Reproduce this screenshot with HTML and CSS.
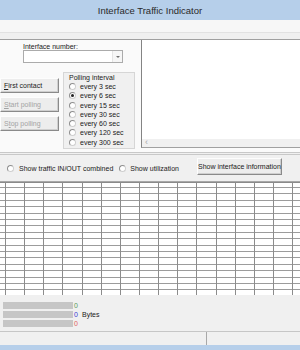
FILE: index.html
```html
<!DOCTYPE html>
<html>
<head>
<meta charset="utf-8">
<link rel="stylesheet" href="styles.css">
</head>
<body>
<div class="titlebar">Interface Traffic Indicator</div>
<div class="menubar"></div>
<div class="toolbar"></div>
<div class="top">
  <div class="left">
    <div class="label">Interface number:</div>
    <div class="combo"><div class="combo-btn"><span class="arrow"></span></div></div>
    <div class="controls">
      <div class="buttons">
        <div class="btn"><u>F</u>irst contact</div>
        <div class="btn disabled"><u>S</u>tart polling</div>
        <div class="btn disabled">S<u>t</u>op polling</div>
      </div>
      <div class="group">
        <div class="group-title">Polling interval</div>
        <div class="opt"><span class="radio"></span>every 3 sec</div>
        <div class="opt"><span class="radio checked"></span>every 6 sec</div>
        <div class="opt"><span class="radio"></span>every 15 sec</div>
        <div class="opt"><span class="radio"></span>every 30 sec</div>
        <div class="opt"><span class="radio"></span>every 60 sec</div>
        <div class="opt"><span class="radio"></span>every 120 sec</div>
        <div class="opt"><span class="radio"></span>every 300 sec</div>
      </div>
    </div>
  </div>
  <div class="listbox">
    <div class="hscroll">&lsaquo;</div>
  </div>
</div>
<div class="sep"></div>
<div class="opts">
  <span class="radio"></span><span class="opt-text">Show traffic IN/OUT combined</span>
  <span class="radio second"></span><span class="opt-text2">Show utilization</span>
  <div class="btn wide">Show interface information</div>
</div>
<div class="graph">
<svg width="300" height="113" viewBox="0 0 300 113" shape-rendering="crispEdges">
  <g stroke="#9c9c9c" stroke-width="1">
    <line x1="0" y1="0.5" x2="300" y2="0.5" stroke="#8a8a8a"/>
    <line x1="0" y1="5.5" x2="300" y2="5.5"/>
    <line x1="0" y1="11.5" x2="300" y2="11.5"/>
    <line x1="0" y1="18.5" x2="300" y2="18.5"/>
    <line x1="0" y1="24.5" x2="300" y2="24.5"/>
    <line x1="0" y1="31.5" x2="300" y2="31.5"/>
    <line x1="0" y1="37.5" x2="300" y2="37.5"/>
    <line x1="0" y1="43.5" x2="300" y2="43.5"/>
    <line x1="0" y1="50.5" x2="300" y2="50.5"/>
    <line x1="0" y1="56.5" x2="300" y2="56.5"/>
    <line x1="0" y1="63.5" x2="300" y2="63.5"/>
    <line x1="0" y1="69.5" x2="300" y2="69.5"/>
    <line x1="0" y1="75.5" x2="300" y2="75.5"/>
    <line x1="0" y1="82.5" x2="300" y2="82.5"/>
    <line x1="0" y1="88.5" x2="300" y2="88.5"/>
    <line x1="0" y1="95.5" x2="300" y2="95.5"/>
    <line x1="0" y1="101.5" x2="300" y2="101.5"/>
    <line x1="0" y1="107.5" x2="300" y2="107.5"/>
  </g>
  <g stroke="#8c8c8c" stroke-width="1">
    <line x1="5.5" y1="0" x2="5.5" y2="113"/>
    <line x1="24.5" y1="0" x2="24.5" y2="113"/>
    <line x1="43.5" y1="0" x2="43.5" y2="113"/>
    <line x1="62.5" y1="0" x2="62.5" y2="113"/>
    <line x1="82.5" y1="0" x2="82.5" y2="113"/>
    <line x1="101.5" y1="0" x2="101.5" y2="113"/>
    <line x1="120.5" y1="0" x2="120.5" y2="113"/>
    <line x1="139.5" y1="0" x2="139.5" y2="113"/>
    <line x1="158.5" y1="0" x2="158.5" y2="113"/>
    <line x1="177.5" y1="0" x2="177.5" y2="113"/>
    <line x1="196.5" y1="0" x2="196.5" y2="113"/>
    <line x1="216.5" y1="0" x2="216.5" y2="113"/>
    <line x1="235.5" y1="0" x2="235.5" y2="113"/>
    <line x1="254.5" y1="0" x2="254.5" y2="113"/>
    <line x1="273.5" y1="0" x2="273.5" y2="113"/>
    <line x1="292.5" y1="0" x2="292.5" y2="113"/>
  </g>
</svg>
</div>
<div class="meters">
  <div class="meter"><div class="bar"></div><span class="val green">0</span></div>
  <div class="meter"><div class="bar"></div><span class="val blue">0</span><span class="unit">Bytes</span></div>
  <div class="meter"><div class="bar"></div><span class="val red">0</span></div>
</div>
<div class="statusbar"><div class="cell"></div></div>
<div class="bottom"></div>
</body>
</html>
```
FILE: styles.css
```css
* { box-sizing: border-box; margin: 0; padding: 0; }
html, body { width: 300px; height: 350px; overflow: hidden; }
body {
  font-family: "Liberation Sans", Arial, sans-serif;
  font-size: 7px;
  color: #1a1a1a;
  background: #f0f0f0;
  display: flex;
  flex-direction: column;
}
.titlebar {
  height: 20px;
  flex: none;
  background: #b6cfea;
  display: flex;
  align-items: center;
  justify-content: center;
  font-size: 9.5px;
  color: #2a2a2a;
}
.menubar { height: 13px; flex: none; background: #f7f7f7; border-bottom: 1px solid #e2e2e2; }
.toolbar { height: 7px; flex: none; background: #f0f0f0; border-bottom: 1px solid #a0a0a0; }
.top { height: 112px; flex: none; display: flex; background: #fafafa; }
.left { width: 141px; flex: none; }
.label { height: 7px; line-height: 7px; margin: 3px 0 0 23px; color: #222; }
.combo {
  margin-left: 23px;
  width: 100px;
  height: 13px;
  border: 1px solid #ababab;
  background: #fff;
  display: flex;
  justify-content: flex-end;
}
.combo-btn {
  width: 10px;
  height: 100%;
  background: #f6f6f6;
  border-left: 1px solid #e4e4e4;
  display: flex;
  align-items: center;
  justify-content: center;
}
.arrow {
  width: 0; height: 0;
  border-left: 2px solid transparent;
  border-right: 2px solid transparent;
  border-top: 2px solid #707070;
}
.controls { display: flex; margin-top: 9px; }
.buttons { width: 59px; margin-top: 6px; display: flex; flex-direction: column; gap: 4px; }
.btn {
  height: 15px;
  display: flex;
  align-items: center;
  padding-left: 3px;
  background: #ededed;
  border-top: 1px solid #fdfdfd;
  border-left: 1px solid #fdfdfd;
  border-right: 1px solid #8a8a8a;
  border-bottom: 1px solid #8a8a8a;
  box-shadow: inset -1px -1px #cfcfcf;
  white-space: nowrap;
}
.btn u { text-decoration: underline; }
.btn.disabled { color: #a3a3a3; }
.group {
  margin-left: 4px;
  width: 72px;
  height: 77px;
  border: 1px solid #d6d6d6;
  background: #f0f0f0;
  padding-left: 5px;
}
.group-title { line-height: 8px; margin-top: 1px; }
.opt { height: 9.25px; display: flex; align-items: center; gap: 4px; white-space: nowrap; }
.radio {
  width: 7px;
  height: 7px;
  flex: none;
  border-radius: 50%;
  border: 1px solid #8e8e8e;
  border-right-color: #cfcfcf;
  border-bottom-color: #cfcfcf;
  background: #fff;
  display: flex;
  align-items: center;
  justify-content: center;
}
.radio.checked::after {
  content: "";
  width: 3px;
  height: 3px;
  border-radius: 50%;
  background: #222;
}
.listbox {
  flex: 1;
  height: 108px;
  border-left: 1px solid #848484;
  border-bottom: 1px solid #a0a0a0;
  background: #fff;
  display: flex;
  flex-direction: column;
  justify-content: flex-end;
}
.hscroll {
  height: 8px;
  background: #f0f0f0;
  padding-left: 3px;
  color: #a8a8a8;
  font-size: 9px;
  line-height: 7px;
}
.sep { height: 3px; flex: none; border-top: 1px solid #c8c8c8; border-bottom: 1px solid #c8c8c8; background: #f0f0f0; }
.opts {
  height: 27px;
  flex: none;
  display: flex;
  align-items: center;
  padding-left: 7px;
  background: #f0f0f0;
  border-bottom: 1px solid #a8a8a8;
}
.opt-text { margin-left: 5px; white-space: nowrap; }
.radio.second { margin-left: 6px; }
.opt-text2 { margin-left: 4px; white-space: nowrap; }
.btn.wide {
  margin-left: 18px;
  width: 85px;
  height: 17px;
  padding-left: 0;
  justify-content: center;
  margin-top: -3px;
}
.graph { height: 113px; flex: none; background: #fff; }
.graph svg { display: block; }
.meters { height: 36px; flex: none; padding: 7px 0 0 3px; display: flex; flex-direction: column; gap: 2px; }
.meter { display: flex; height: 7px; align-items: center; }
.bar { width: 70px; height: 7px; background: #c6c6c6; }
.val { width: 5px; text-align: right; line-height: 7px; }
.green { color: #5a9a5a; }
.blue { color: #3a3ad0; }
.red { color: #e06060; }
.unit { margin-left: 4px; line-height: 7px; }
.statusbar { height: 14px; flex: none; border-top: 1px solid #c6c6c6; display: flex; }
.statusbar .cell { width: 207px; border-right: 1px solid #a8a8a8; }
.bottom { height: 5px; flex: none; background: #b6cfea; }
```
